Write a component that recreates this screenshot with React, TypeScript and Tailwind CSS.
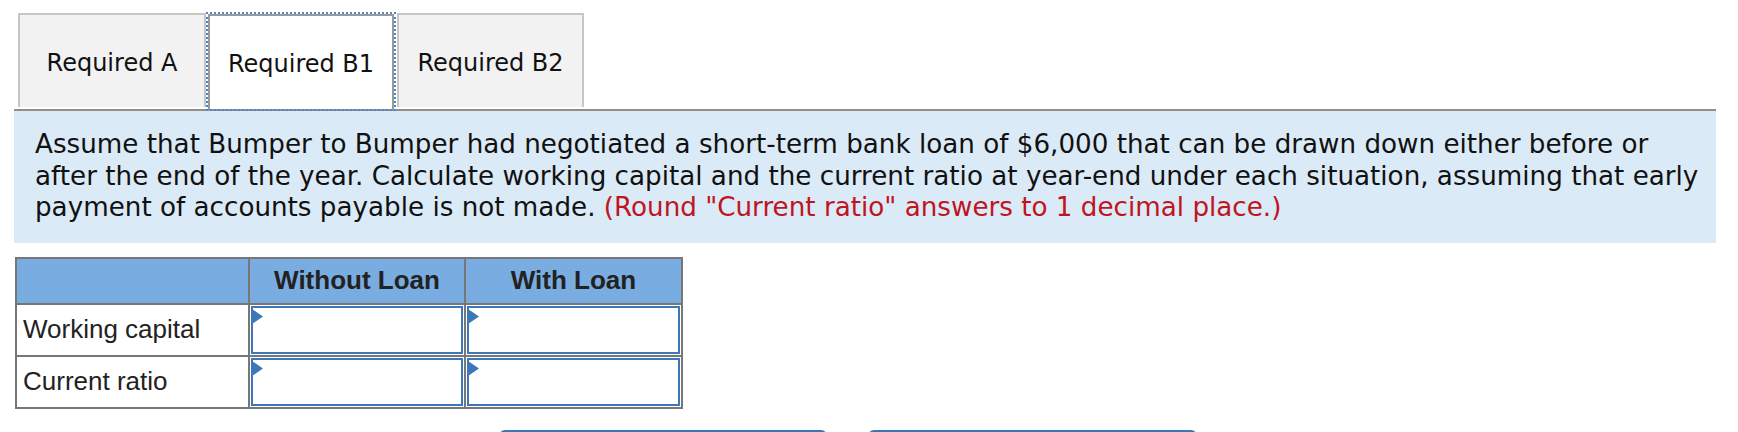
import React from "react";

const tabFont = { fontFamily: '"DejaVu Sans", Verdana, sans-serif' };
const tableFont = { fontFamily: '"Liberation Sans", Arial, sans-serif' };

function AnswerCell() {
  return (
    <td className="border-2 border-[#777777] p-[1px] align-top">
      <div className="relative h-[48px] w-full border-2 border-[#3d77b8] bg-white">
        <svg
          className="absolute left-[-1px] top-[1px]"
          width="12"
          height="15"
          viewBox="0 0 12 15"
        >
          <polygon points="0,0 11,7.5 0,15" fill="#3d77b8" />
        </svg>
      </div>
    </td>
  );
}

export default function App() {
  return (
    <div className="h-[432px] w-full overflow-hidden bg-white">
      {/* tab strip */}
      <div className="pl-[14px] pr-[22px] pt-[13px]">
        <div className="flex items-start pl-[4px]" style={tabFont}>
          <div className="flex h-[94px] w-[188px] items-center justify-center border-2 border-b-0 border-[#c6c6c6] bg-[#f2f2f2] pt-[4px] text-[24px] text-[#111]">
            Required A
          </div>
          <div className="relative z-10 ml-[2px] mt-[1px] flex h-[95px] w-[186px] items-center justify-center border-2 border-b-0 border-[#9a9a9a] bg-white pt-[2px] text-[24px] text-[#111] outline-2 outline-offset-[0px] outline-dotted outline-[#4a86c8]">
            Required B1
          </div>
          <div className="ml-[3px] flex h-[94px] w-[187px] items-center justify-center border-2 border-b-0 border-[#c6c6c6] bg-[#f2f2f2] pt-[4px] text-[24px] text-[#111]">
            Required B2
          </div>
        </div>
        {/* instructions panel */}
        <div className="border-t-2 border-[#8f8f8f] bg-[#dbeaf7] px-[21px] pb-[19px] pt-[18px]">
          <p className="whitespace-nowrap text-[26.2px] leading-[31.5px] text-[#111]" style={tabFont}>
            Assume that Bumper to Bumper had negotiated a short-term bank loan of $6,000 that can be drawn down either before or
            <br />
            after the end of the year. Calculate working capital and the current ratio at year-end under each situation, assuming that early
            <br />
            payment of accounts payable is not made.{" "}
            <span className="text-[#c0141e]">(Round "Current ratio" answers to 1 decimal place.)</span>
          </p>
        </div>
      </div>

      {/* answer grid */}
      <div className="pl-[15px] pt-[14px]">
        <table className="border-collapse border-2 border-[#777777]" style={tableFont}>
          <thead>
            <tr className="h-[46px] bg-[#79ade1]">
              <th className="w-[233px] border-2 border-[#777777]"></th>
              <th className="w-[216px] border-2 border-[#777777] text-[26px] font-bold text-[#222]">Without Loan</th>
              <th className="w-[217px] border-2 border-[#777777] text-[26px] font-bold text-[#222]">With Loan</th>
            </tr>
          </thead>
          <tbody>
            <tr className="h-[52px]">
              <td className="border-2 border-[#777777] pl-[6px] text-[26px] text-[#222]">Working capital</td>
              <AnswerCell />
              <AnswerCell />
            </tr>
            <tr className="h-[52px]">
              <td className="border-2 border-[#777777] pl-[6px] text-[26px] text-[#222]">Current ratio</td>
              <AnswerCell />
              <AnswerCell />
            </tr>
          </tbody>
        </table>
      </div>

      {/* action buttons */}
      <div className="flex gap-[41px] pl-[499px] pt-[21px]">
        <div className="h-[40px] w-[328px] rounded-t-[6px] bg-[#3b75b5]"></div>
        <div className="h-[40px] w-[329px] rounded-t-[6px] bg-[#3b75b5]"></div>
      </div>
    </div>
  );
}
